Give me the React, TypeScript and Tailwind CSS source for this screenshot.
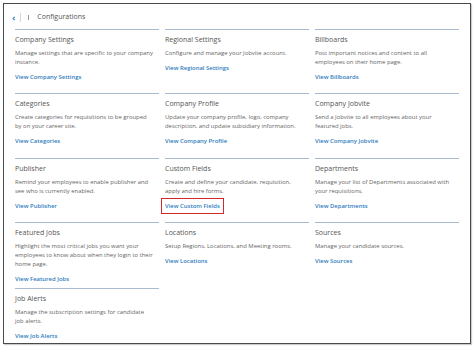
type Item = {
  title: string;
  lines: string[];
  link: string;
  marked?: boolean;
};

const rows: (Item | null)[][] = [
  [
    {
      title: 'Company Settings',
      lines: ['Manage settings that are specific to your company', 'instance.'],
      link: 'View Company Settings',
    },
    {
      title: 'Regional Settings',
      lines: ['Configure and manage your Jobvite account.'],
      link: 'View Regional Settings',
    },
    {
      title: 'Billboards',
      lines: ['Post important notices and content to all', 'employees on their home page.'],
      link: 'View Billboards',
    },
  ],
  [
    {
      title: 'Categories',
      lines: ['Create categories for requisitions to be grouped', 'by on your career site.'],
      link: 'View Categories',
    },
    {
      title: 'Company Profile',
      lines: ['Update your company profile, logo, company', 'description, and update subsidiary information.'],
      link: 'View Company Profile',
    },
    {
      title: 'Company Jobvite',
      lines: ['Send a Jobvite to all employees about your', 'featured jobs.'],
      link: 'View Company Jobvite',
    },
  ],
  [
    {
      title: 'Publisher',
      lines: ['Remind your employees to enable publisher and', 'see who is currently enabled.'],
      link: 'View Publisher',
    },
    {
      title: 'Custom Fields',
      lines: ['Create and define your candidate, requisition,', 'apply and hire forms.'],
      link: 'View Custom Fields',
      marked: true,
    },
    {
      title: 'Departments',
      lines: ['Manage your list of Departments associated with', 'your requisitions.'],
      link: 'View Departments',
    },
  ],
  [
    {
      title: 'Featured Jobs',
      lines: [
        'Highlight the most critical jobs you want your',
        'employees to know about when they login to their',
        'home page.',
      ],
      link: 'View Featured Jobs',
    },
    {
      title: 'Locations',
      lines: ['Setup Regions, Locations, and Meeting rooms.'],
      link: 'View Locations',
    },
    {
      title: 'Sources',
      lines: ['Manage your candidate sources.'],
      link: 'View Sources',
    },
  ],
  [
    {
      title: 'Job Alerts',
      lines: ['Manage the subscription settings for candidate', 'job alerts.'],
      link: 'View Job Alerts',
    },
    null,
    null,
  ],
];

const rowHeights = ['h-[64px]', 'h-[65px]', 'h-[64px]', 'h-[66px]', 'h-[56px]'];

function Card({ item }: { item: Item }) {
  return (
    <div className="h-full border-t border-[#a9bccf] pt-[4px]">
      <h3 className="text-[7px] leading-[12px] text-[#555]">{item.title}</h3>
      <div className="mt-[2.5px] text-[5.9px] leading-[9px] text-[#666]">
        {item.lines.map((line) => (
          <p key={line} className="whitespace-nowrap">
            {line}
          </p>
        ))}
      </div>
      <div className="mt-[2.5px] leading-[9px]">
        <a
          className={
            item.marked
              ? 'text-[5.9px] font-semibold text-[#2f7cc0] outline-[1.5px] outline-solid outline-[#d3272b] outline-offset-[3px]'
              : 'text-[5.9px] font-semibold text-[#2f7cc0]'
          }
        >
          {item.link}
        </a>
      </div>
    </div>
  );
}

export default function App() {
  return (
    <div className="h-[348px] w-[474px] bg-white p-[3px] font-['Open_Sans',sans-serif]">
      <div className="h-[341px] w-[468px] border-[1.5px] border-[#4a4a4a] bg-white pl-[11px] shadow-[1px_1px_1px_rgba(0,0,0,0.2)]">
        <div className="flex h-[25px] items-center pt-[1px]">
          <span className="-ml-[3px] text-[9px] font-bold leading-none text-[#2f7cc0]">‹</span>
          <span className="ml-[5px] h-[9px] w-px bg-[#d8d8d8]" />
          <span className="ml-[7px] h-[5px] w-px bg-[#999]" />
          <span className="ml-[8px] text-[7px] text-[#555]">Configurations</span>
        </div>
        <div className="grid w-[444px] grid-cols-3 gap-x-[6px]">
          {rows.map((row, r) =>
            row.map((item, c) => (
              <div key={`${r}-${c}`} className={rowHeights[r]}>
                {item && <Card item={item} />}
              </div>
            )),
          )}
        </div>
      </div>
    </div>
  );
}
